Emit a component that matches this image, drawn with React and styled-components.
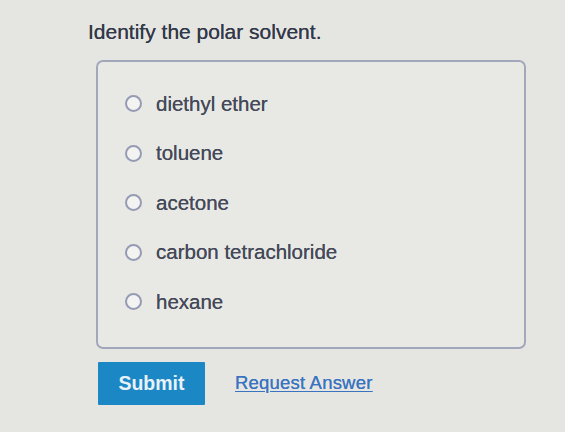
import styled, { createGlobalStyle } from 'styled-components';

const GlobalStyle = createGlobalStyle`
    html, body {
        margin: 0;
        padding: 0;
        background: #e5e6e2;
    }
    body {
        font-family: "Liberation Sans", Arial, sans-serif;
    }
`;

const options = [
    'diethyl ether',
    'toluene',
    'acetone',
    'carbon tetrachloride',
    'hexane',
];

function App() {
    return (
        <Page>
            <GlobalStyle />
            <Question>Identify the polar solvent.</Question>
            <Choices>
                {options.map((opt) => (
                    <Choice key={opt}>
                        <Radio type="radio" name="solvent" />
                        <ChoiceText>{opt}</ChoiceText>
                    </Choice>
                ))}
            </Choices>
            <Actions>
                <SubmitButton>Submit</SubmitButton>
                <RequestLink href="#">Request Answer</RequestLink>
            </Actions>
        </Page>
    );
}

const Page = styled.div`
    width: 565px;
    height: 432px;
    box-sizing: border-box;
    padding: 20px 0 0 88px;
    background: #e5e6e2;
    overflow: hidden;
`;

const Question = styled.div`
    font-size: 21px;
    line-height: 24px;
    color: #333849;
    text-shadow: 0 0 0.6px #333849;
`;

const Choices = styled.div`
    display: flex;
    flex-direction: column;
    box-sizing: border-box;
    width: 430px;
    margin: 16px 0 0 8px;
    padding: 17px 0 20px 27px;
    border: 2px solid #a3a7bb;
    border-radius: 7px;
    background: #e8e9e5;
`;

const Choice = styled.label`
    display: flex;
    align-items: center;
    gap: 14px;
    height: 49.5px;
    cursor: pointer;
`;

const Radio = styled.input`
    appearance: none;
    margin: 0;
    width: 17px;
    height: 17px;
    border: 2px solid #959bb4;
    border-radius: 50%;
    background: #f3f3f1;
    box-sizing: border-box;
`;

const ChoiceText = styled.span`
    font-size: 20.5px;
    color: #454959;
    text-shadow: 0 0 0.5px #454959;
`;

const Actions = styled.div`
    display: flex;
    align-items: center;
    gap: 30px;
    margin: 13px 0 0 10px;
`;

const SubmitButton = styled.button`
    width: 107px;
    height: 43px;
    border: none;
    border-radius: 1px;
    background: #1c87c5;
    color: #e9f2f8;
    font-family: "Liberation Sans", Arial, sans-serif;
    font-size: 19.5px;
    font-weight: bold;
    cursor: pointer;
`;

const RequestLink = styled.a`
    font-size: 18.5px;
    color: #3a74c0;
    text-decoration: underline;
    text-underline-offset: 2px;
    letter-spacing: 0.2px;
    text-shadow: 0 0 0.5px #3a74c0;
`;

export default App;
